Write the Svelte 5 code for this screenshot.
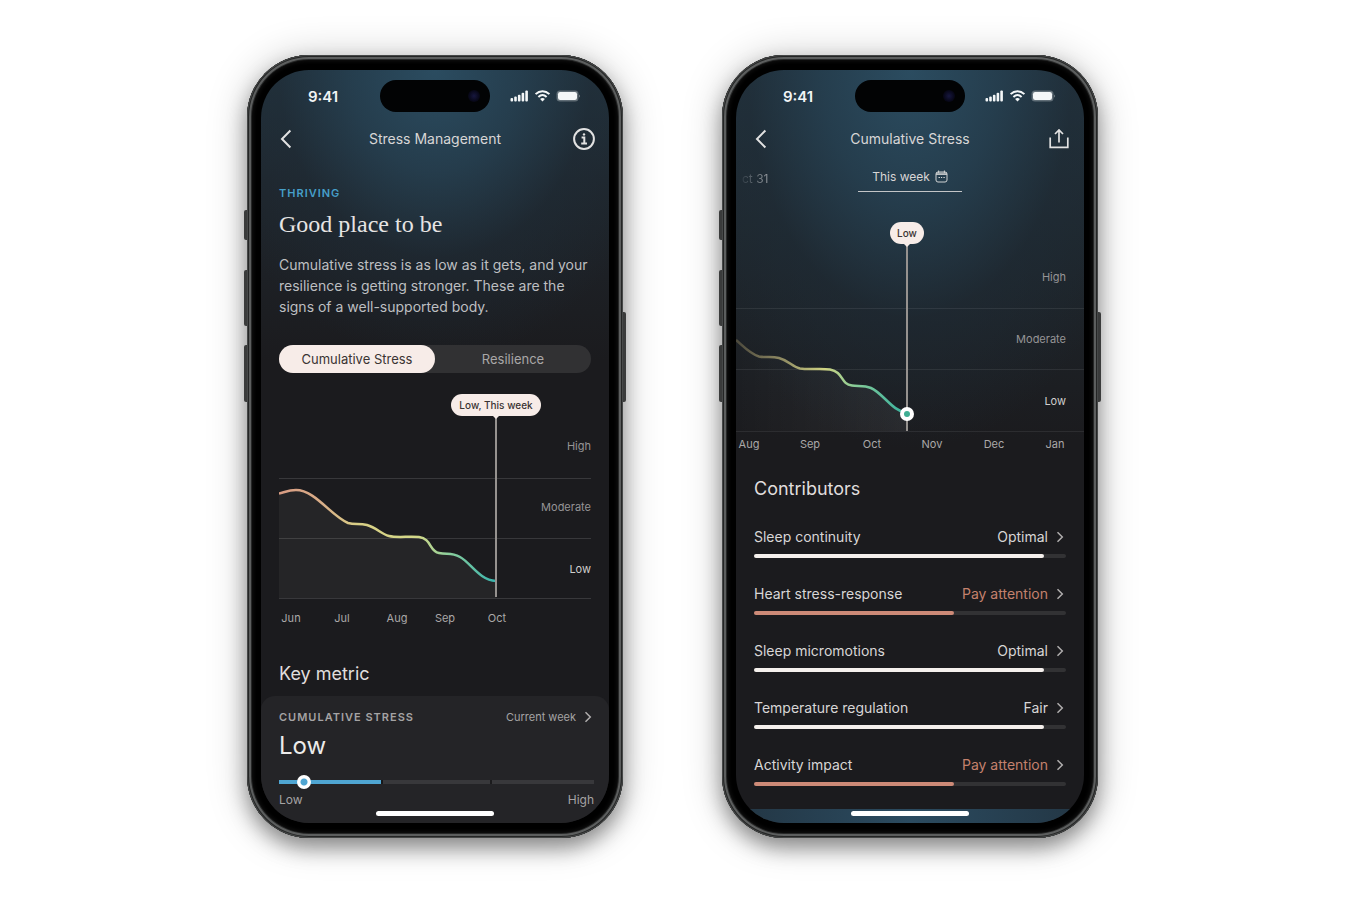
<script>
  let tab = $state('Cumulative Stress');
  let level = $state(6);

  const tabs = ['Cumulative Stress', 'Resilience'];

  const months = [
    { name: 'Jun', x: 12 },
    { name: 'Jul', x: 63 },
    { name: 'Aug', x: 118 },
    { name: 'Sep', x: 166 },
    { name: 'Oct', x: 218 },
  ];

  const weekMonths = [
    { name: 'Aug', x: 13 },
    { name: 'Sep', x: 74 },
    { name: 'Oct', x: 136 },
    { name: 'Nov', x: 196 },
    { name: 'Dec', x: 258 },
    { name: 'Jan', x: 319 },
  ];

  const contributors = [
    { name: 'Sleep continuity', status: 'Optimal', value: 93 },
    { name: 'Heart stress-response', status: 'Pay attention', value: 64, warn: true },
    { name: 'Sleep micromotions', status: 'Optimal', value: 93 },
    { name: 'Temperature regulation', status: 'Fair', value: 93 },
    { name: 'Activity impact', status: 'Pay attention', value: 64, warn: true },
  ];

  const curve = 'M0 103.5C6 102 10 100 17 100C36 100 52 126 69 133C76 135 80 133 88 135C98 138 102 144 110 146C118 148 130 146 140 147C153 149 150 161 160 163C168 165 172 162 181 167C192 173 200 190 217 191';
  const weekCurve = 'M0 125C6 130 14 139 23 141.5C30 143 34 141 43 143C54 146 56 152 64 153.5C74 155 84 153 94 154.5C108 157 104 169 116 170.5C122 171.5 128 170 135 173C148 179 156 196 171 198';
</script>

{#snippet chevron()}
  <svg class="chevron" width="8" height="12" viewBox="0 0 8 12" aria-hidden="true">
    <path d="M1.5 1.2 6.3 6 1.5 10.8" />
  </svg>
{/snippet}

{#snippet statusBar()}
  <div class="status">
    <span class="time">9:41</span>
    <span class="island"><span class="lens"></span></span>
    <svg class="signal" width="70" height="14" viewBox="0 0 70 14" aria-hidden="true">
      <rect x="0.5" y="9" width="2.6" height="3.5" rx="1" />
      <rect x="4.2" y="7.6" width="2.6" height="4.9" rx="1" />
      <rect x="7.9" y="5.8" width="2.6" height="6.7" rx="1" />
      <rect x="11.6" y="3.8" width="2.6" height="8.7" rx="1" />
      <rect x="15.3" y="1.6" width="2.6" height="10.9" rx="1" />
      <g class="arcs">
        <path d="M25.6 5.1C29.6 1.2 35.4 1.2 39.4 5.1" />
        <path d="M28.4 8C30.9 5.6 34.1 5.6 36.6 8" />
      </g>
      <path d="M32.5 12.4 30.1 10C31.5 8.8 33.5 8.8 34.9 10Z" />
      <rect x="46.5" y="1.5" width="22" height="11" rx="3.5" opacity="0.3" />
      <rect x="48" y="3" width="19" height="8" rx="2.2" />
      <path d="M69.2 5.4C70.2 6 70.2 8 69.2 8.6Z" opacity="0.5" />
    </svg>
  </div>
{/snippet}

{#snippet backButton()}
  <button class="icon" aria-label="Back">
    <svg width="12" height="20" viewBox="0 0 12 20">
      <path d="M10.4 1.5 2 10 10.4 18.5" />
    </svg>
  </button>
{/snippet}

{#snippet sideButtons()}
  <i class="key action"></i>
  <i class="key up"></i>
  <i class="key down"></i>
  <i class="key power"></i>
{/snippet}

<main>
  <section class="phone">
    {@render sideButtons()}
    <div class="screen">
      {@render statusBar()}
      <header>
        {@render backButton()}
        <h1>Stress Management</h1>
        <button class="icon" aria-label="Info">
          <svg width="22" height="22" viewBox="0 0 22 22">
            <circle cx="11" cy="11" r="9.9" />
            <path d="M8.6 9.4H11.3V15.6M8.2 15.6H14" />
            <circle class="dot" cx="11" cy="6.4" r="1.2" />
          </svg>
        </button>
      </header>

      <div class="summary">
        <p class="eyebrow">Thriving</p>
        <h2 class="headline">Good place to be</h2>
        <p class="intro">Cumulative stress is as low as it gets, and your resilience is getting stronger. These are the signs of a well-supported body.</p>

        <div class="tabs">
          {#each tabs as name}
            <button class:active={tab === name} onclick={() => (tab = name)}>{name}</button>
          {/each}
        </div>

        <svg class="chart" viewBox="0 0 312 240">
          <defs>
            <linearGradient id="line" gradientUnits="userSpaceOnUse" x1="0" y1="0" x2="217" y2="0">
              <stop offset="0" stop-color="#d99c83" />
              <stop offset="0.2" stop-color="#d9ae88" />
              <stop offset="0.36" stop-color="#d9cf86" />
              <stop offset="0.64" stop-color="#d3d888" />
              <stop offset="0.78" stop-color="#8ccf9c" />
              <stop offset="1" stop-color="#38b3ad" />
            </linearGradient>
          </defs>
          <path class="area" d="{curve}V208H0Z" />
          <path class="grid" d="M0 88.5H312M0 148.5H312M0 208.5H312" />
          <path class="curve" d={curve} stroke="url(#line)" />
          <path class="marker" d="M217 26V207" />
          <path class="pill" d="M213 25H221L217 29Z" />
          <rect class="pill" x="172" y="4" width="90" height="22" rx="11" />
          <text class="tip" x="217" y="19">Low, This week</text>
          <text class="level" x="312" y="60">High</text>
          <text class="level" x="312" y="121">Moderate</text>
          <text class="level current" x="312" y="183">Low</text>
          {#each months as m}
            <text class="month" x={m.x} y="232">{m.name}</text>
          {/each}
        </svg>

        <h3>Key metric</h3>
      </div>

      <div class="card">
        <div class="card-head">
          <label class="card-title" for="stress">Cumulative stress</label>
          <a href="#week">Current week {@render chevron()}</a>
        </div>
        <p class="value">Low</p>
        <input id="stress" type="range" min="0" max="100" bind:value={level} />
        <div class="scale"><span>Low</span><span>High</span></div>
      </div>
      <span class="home"></span>
    </div>
  </section>

  <section class="phone">
    {@render sideButtons()}
    <div class="screen detail">
      {@render statusBar()}
      <header>
        {@render backButton()}
        <h1>Cumulative Stress</h1>
        <button class="icon share" aria-label="Share">
          <svg width="22" height="22" viewBox="0 0 22 22">
            <path d="M2.2 9.4V19.4H19.8V9.4M11 14.4V2.2M7 6 11 2 15 6" />
          </svg>
        </button>
      </header>

      <div class="weeks">
        <button class="previous">ct 31</button>
        <button class="selected">
          This week
          <svg width="13" height="13" viewBox="0 0 13 13" aria-hidden="true">
            <rect x="1" y="2" width="11" height="10" rx="2" />
            <path d="M1 4.4H12M1 3.2H12M3.6 0.5V3M9.4 0.5V3M3.5 7.5H5M6 7.5H7.2M8.4 7.5H9.8" />
          </svg>
        </button>
      </div>

      <svg class="chart" viewBox="0 0 348 240">
        <defs>
          <linearGradient id="week-line" gradientUnits="userSpaceOnUse" x1="0" y1="0" x2="171" y2="0">
            <stop offset="0" stop-color="#4c493c" />
            <stop offset="0.25" stop-color="#8b8661" />
            <stop offset="0.52" stop-color="#cfd383" />
            <stop offset="0.7" stop-color="#86cc98" />
            <stop offset="1" stop-color="#35b09f" />
          </linearGradient>
          <linearGradient id="week-area" x1="0" x2="1">
            <stop offset="0" stop-color="#fff" stop-opacity="0" />
            <stop offset="1" stop-color="#fff" stop-opacity="0.06" />
          </linearGradient>
        </defs>
        <path d="{weekCurve}V216H0Z" fill="url(#week-area)" />
        <path class="grid" d="M0 93.5H348M0 154.5H348M0 216.5H348" />
        <path class="curve" d={weekCurve} stroke="url(#week-line)" />
        <path class="marker" d="M171 29V216" />
        <path class="pill" d="M167 28H175L171 32Z" />
        <rect class="pill" x="154" y="7" width="34" height="22" rx="11" />
        <text class="tip" x="171" y="22">Low</text>
        <circle cx="171" cy="199" r="7" fill="#fff" />
        <circle cx="171" cy="199" r="3" fill="#3fae93" />
        <text class="level" x="330" y="66">High</text>
        <text class="level" x="330" y="128">Moderate</text>
        <text class="level current" x="330" y="190">Low</text>
        {#each weekMonths as m}
          <text class="month" x={m.x} y="233">{m.name}</text>
        {/each}
      </svg>

      <div class="contributors">
        <h3>Contributors</h3>
        {#each contributors as c}
          <a href="#contributor" class:warn={c.warn}>
            <span class="row">
              <span class="name">{c.name}</span>
              <span class="state">{c.status}</span>
              {@render chevron()}
            </span>
            <span class="bar"><span class="fill" style="width: {c.value}%"></span></span>
          </a>
        {/each}
      </div>
      <div class="footer"></div>
      <span class="home"></span>
    </div>
  </section>
</main>

<style>
  :global(body) {
    background: #fff;
  }

  main {
    display: flex;
    flex-wrap: wrap;
    justify-content: center;
    gap: 99px;
    padding: 55px 5px 60px 0;
    font-family: Inter, "Liberation Sans", sans-serif;
    color: #d8d6d6;
  }

  h1, h2, h3, p {
    margin: 0;
    font-weight: 400;
  }

  button {
    padding: 0;
    border: 0;
    background: none;
    color: inherit;
    font: inherit;
    cursor: pointer;
  }

  a {
    color: inherit;
    text-decoration: none;
  }

  .phone {
    position: relative;
    display: flex;
    box-sizing: border-box;
    width: 376px;
    padding: 15px 14px;
    border-radius: 62px;
    background: #000;
    box-shadow:
      inset 0 0 0 1px #464848,
      inset 0 0 0 2px #242525,
      inset 0 0 0 4px #5c5e5e,
      inset 0 0 0 5px #262727,
      inset 0 0 4px 6px #111,
      0 10px 20px rgba(0, 0, 0, .38),
      0 2px 40px rgba(0, 0, 0, .22);
  }

  .screen {
    position: relative;
    display: flex;
    flex-direction: column;
    width: 100%;
    min-height: 753px;
    border-radius: 48px;
    overflow: hidden;
    background:
      radial-gradient(ellipse 240px 290px at 50% 0, #2b4c60 0%, rgba(38, 64, 81, .85) 35%, rgba(31, 45, 56, .5) 65%, rgba(27, 31, 37, 0) 100%),
      linear-gradient(#22323d 0, #1f262d 110px, #1b1b1e 290px);
  }

  .detail {
    background:
      radial-gradient(ellipse 250px 380px at 50% 0, #2b4c60 0%, rgba(38, 64, 81, .85) 35%, rgba(31, 45, 56, .5) 65%, rgba(27, 31, 37, 0) 100%),
      linear-gradient(#22323d 0, #1f282f 150px, #1b1b1e 370px);
  }

  .key {
    position: absolute;
    left: -3px;
    width: 3px;
    border-radius: 2px 0 0 2px;
    background: #3a3b3b;
  }
  .action {
    top: 155px;
    height: 30px;
  }
  .up {
    top: 215px;
    height: 56px;
  }
  .down {
    top: 290px;
    height: 57px;
  }
  .power {
    top: 257px;
    left: auto;
    right: -3px;
    height: 90px;
    border-radius: 0 2px 2px 0;
  }

  .status {
    display: grid;
    grid-template-columns: 1fr 110px 1fr;
    align-items: center;
    justify-items: center;
    height: 52px;
    color: #f1f4f5;
  }

  .time {
    padding-left: 5px;
    font-size: 15px;
    font-weight: 600;
  }

  .island {
    display: flex;
    align-items: center;
    justify-content: flex-end;
    box-sizing: border-box;
    width: 110px;
    height: 32px;
    padding-right: 10px;
    border-radius: 16px;
    background: #020304;
  }

  .lens {
    width: 12px;
    height: 12px;
    border-radius: 50%;
    background: radial-gradient(#17173f, #08081a 60%, #030306);
  }

  .signal {
    margin-right: 9px;
    fill: #f4f7f8;
  }
  .arcs {
    fill: none;
    stroke: #f4f7f8;
    stroke-width: 2;
  }

  header {
    display: flex;
    align-items: center;
    justify-content: space-between;
    height: 34px;
    padding: 0 14px;
  }

  h1 {
    font-size: 14px;
    line-height: 20px;
  }

  .icon {
    display: flex;
    justify-content: center;
    width: 22px;
  }
  .icon svg {
    fill: none;
    stroke: #e2e2e2;
    stroke-width: 2;
  }
  .share svg {
    stroke-width: 1.7;
  }
  .icon .dot {
    fill: #e2e2e2;
    stroke: none;
  }

  .summary {
    padding: 27px 18px 0;
  }

  .eyebrow {
    color: #469fc9;
    font-size: 11px;
    font-weight: 600;
    line-height: 20px;
    letter-spacing: 1px;
    text-transform: uppercase;
  }

  .headline {
    margin-top: 4px;
    color: #e6e4e3;
    font-family: "Liberation Serif", serif;
    font-size: 24px;
    line-height: 34px;
  }

  .intro {
    margin-top: 13px;
    color: #bdbfc1;
    font-size: 14px;
    line-height: 21px;
  }

  .tabs {
    display: grid;
    grid-template-columns: 1fr 1fr;
    margin-top: 28px;
    border-radius: 14px;
    background: #313133;
  }
  .tabs button {
    height: 28px;
    border-radius: 14px;
    color: #a9a7a7;
    font-size: 13px;
  }
  .tabs .active {
    background: #f7ece8;
    color: #3a3433;
  }

  .chart {
    display: block;
    width: 100%;
  }
  .summary .chart {
    margin-top: 17px;
  }
  .area {
    fill: #252527;
  }
  .grid {
    stroke: rgba(255, 255, 255, .13);
  }
  .detail .grid {
    stroke: rgba(255, 255, 255, .08);
  }
  .curve {
    fill: none;
    stroke-width: 2.5;
  }
  .marker {
    stroke: #96928f;
    stroke-width: 2;
  }
  .pill {
    fill: #f7ece8;
  }
  .tip {
    fill: #3a3433;
    font-size: 10px;
    font-weight: 500;
    text-anchor: middle;
  }
  .level {
    fill: #969496;
    font-size: 11px;
    text-anchor: end;
  }
  .current {
    fill: #d0cecd;
  }
  .month {
    fill: #aaa8a8;
    font-size: 11px;
    text-anchor: middle;
  }

  h3 {
    color: #e0dedd;
    font-size: 18px;
    line-height: 24px;
  }
  .summary h3 {
    margin-top: 32px;
  }

  .card {
    flex: 1;
    margin-top: 10px;
    padding: 11px 15px 0 18px;
    border-radius: 14px 14px 0 0;
    background: #242427;
  }

  .card-head {
    display: flex;
    justify-content: space-between;
    color: #a5a3a4;
    font-size: 11px;
    line-height: 20px;
  }
  .card-head a {
    display: flex;
    align-items: center;
    gap: 8px;
    padding-right: 2px;
  }
  .card-title {
    font-weight: 600;
    letter-spacing: 1px;
    text-transform: uppercase;
  }

  .value {
    margin-top: 4px;
    color: #ecebea;
    font-size: 24px;
    line-height: 30px;
  }

  input {
    display: block;
    width: 100%;
    height: 16px;
    margin: 13px 0 0;
    appearance: none;
    background: linear-gradient(90deg, #4fa5d2 0 102px, #171719 102px 104px, #38383b 104px 211px, #1b1b1d 211px 213px, #38383b 213px) center / 100% 4px no-repeat;
  }
  input::-webkit-slider-thumb {
    width: 14px;
    height: 14px;
    border: 0;
    border-radius: 50%;
    appearance: none;
    background: radial-gradient(circle, #4fa5d2 0 3px, #fff 4px);
  }

  .scale {
    display: flex;
    justify-content: space-between;
    color: #a5a3a4;
    font-size: 12px;
    line-height: 20px;
  }

  .chevron {
    flex: none;
    fill: none;
    stroke: #b0aeae;
    stroke-width: 1.5;
  }

  .home {
    position: absolute;
    left: 50%;
    bottom: 7px;
    width: 118px;
    height: 5px;
    margin-left: -59px;
    border-radius: 3px;
    background: #fff;
  }

  .weeks {
    display: grid;
    grid-template-columns: 1fr 104px 1fr;
    height: 36px;
    margin-bottom: 23px;
    font-size: 12px;
  }
  .previous {
    padding: 8px 0 0 6px;
    background: linear-gradient(90deg, #2b3741 4px, #a0a5a9 36px);
    background-clip: text;
    color: transparent;
    text-align: left;
  }
  .selected {
    display: flex;
    align-items: center;
    justify-content: center;
    gap: 5px;
    padding-top: 5px;
    border-bottom: 1px solid #c3c5c7;
  }
  .selected svg {
    fill: none;
    stroke: #d0d2d3;
  }

  .contributors {
    display: flex;
    flex-direction: column;
    gap: 26px;
    padding: 22px 18px;
  }
  .contributors a {
    font-size: 14px;
    line-height: 20px;
  }
  .row {
    display: flex;
    align-items: center;
    gap: 8px;
    padding-right: 2px;
  }
  .name {
    flex: 1;
  }
  .bar {
    display: block;
    height: 4px;
    margin-top: 7px;
    border-radius: 2px;
    background: #323234;
  }
  .fill {
    display: block;
    height: 100%;
    border-radius: 2px;
    background: #f5f0ed;
  }
  .warn .state {
    color: #c4816d;
  }
  .warn .fill {
    background: #cd8a77;
  }

  .footer {
    height: 14px;
    margin-top: auto;
    background: linear-gradient(90deg, #233644, #2b4b60 50%, #233644);
  }
</style>
